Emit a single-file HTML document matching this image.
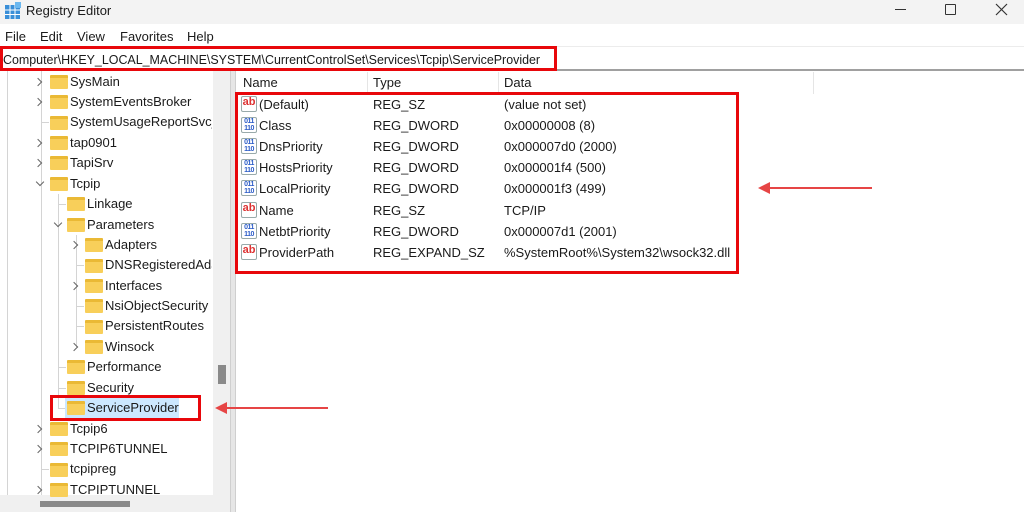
<!DOCTYPE html>
<html><head><style>
*{margin:0;padding:0;box-sizing:border-box}
body{width:1024px;height:512px;overflow:hidden;background:#fff;font-family:"Liberation Sans",sans-serif;font-size:13px;color:#1a1a1a;position:relative}
.a{position:absolute;white-space:nowrap}
.t{position:absolute;white-space:nowrap;height:18px;line-height:18px}
.f{position:absolute;width:18px;height:14px;background:#f8cf5a;border-radius:1px;border-top:3px solid #eab935}
.ch{position:absolute;width:6px;height:6px;border-right:1.3px solid #666;border-bottom:1.3px solid #666}
.r{position:absolute;left:0;transform:rotate(-45deg)}
.d{transform:rotate(45deg)}
.vl{position:absolute;width:1px;background:#d4d4d4}
.hl{position:absolute;height:1px;background:#d4d4d4}
.ic{position:absolute;width:16px;height:16px;border:1px solid #9aa;background:#fff;border-radius:2px;font-size:9px;font-weight:bold;line-height:10px;text-align:center}
.ab{color:#d33;font-size:11px;line-height:11px}
.bin{color:#2a5bc7;font-size:7px;line-height:7px;letter-spacing:-0.5px}
.box{position:absolute;border:3px solid #e8070b}
</style></head><body>
<div class="a" style="left:0;top:0;width:1024px;height:24px;background:#f3f3f3"></div>
<svg class="a" style="left:4px;top:2px" width="18" height="18"><rect x="1" y="3" width="15" height="14" fill="#3a8fd8"/><g stroke="#fff" stroke-width="1"><line x1="1" y1="8" x2="16" y2="8"/><line x1="1" y1="12.5" x2="16" y2="12.5"/><line x1="6" y1="3" x2="6" y2="17"/><line x1="11" y1="3" x2="11" y2="17"/></g><rect x="11" y="0" width="6" height="6" fill="#6bb8f0"/></svg>
<div class="t" style="left:26px;top:2px;font-size:13px">Registry Editor</div>
<div class="a" style="left:895px;top:9px;width:11px;height:1px;background:#333"></div>
<div class="a" style="left:945px;top:4px;width:11px;height:11px;border:1.3px solid #333;border-radius:1px"></div>
<svg class="a" style="left:995px;top:3px" width="13" height="13"><path d="M1 1L12 12M12 1L1 12" stroke="#333" stroke-width="1.2"/></svg>
<div class="t" style="left:5px;top:28px">File</div>
<div class="t" style="left:40px;top:28px">Edit</div>
<div class="t" style="left:77px;top:28px">View</div>
<div class="t" style="left:120px;top:28px">Favorites</div>
<div class="t" style="left:187px;top:28px">Help</div>
<div class="a" style="left:0;top:46px;width:1024px;height:1px;background:#ececec"></div>
<div class="t" style="left:3px;top:51px;font-size:12.45px">Computer\HKEY_LOCAL_MACHINE\SYSTEM\CurrentControlSet\Services\Tcpip\ServiceProvider</div>
<div class="a" style="left:0;top:69px;width:1024px;height:2px;background:#a0a0a0"></div>
<div class="a" style="left:213px;top:71px;width:17px;height:424px;background:#f0f0f0"></div>
<div class="a" style="left:218px;top:365px;width:8px;height:19px;background:#8a8a8a"></div>
<div class="a" style="left:0;top:495px;width:230px;height:17px;background:#f0f0f0"></div>
<div class="a" style="left:40px;top:501px;width:90px;height:6px;background:#8a8a8a"></div>
<div class="a" style="left:230px;top:71px;width:6px;height:441px;background:#e6e6e6;border-left:1px solid #cfcfcf;border-right:1px solid #cfcfcf"></div>
<div class="vl" style="left:7px;top:71px;height:424px"></div>
<div class="vl" style="left:41px;top:71px;height:424px"></div>
<div class="vl" style="left:58px;top:194px;height:214px"></div>
<div class="vl" style="left:76px;top:235px;height:112px"></div>
<div class="hl" style="left:41px;top:122px;width:8px"></div>
<div class="hl" style="left:41px;top:469px;width:8px"></div>
<div class="hl" style="left:58px;top:204px;width:8px"></div>
<div class="hl" style="left:58px;top:367px;width:8px"></div>
<div class="hl" style="left:58px;top:388px;width:8px"></div>
<div class="hl" style="left:58px;top:408px;width:8px"></div>
<div class="hl" style="left:76px;top:265px;width:8px"></div>
<div class="hl" style="left:76px;top:306px;width:8px"></div>
<div class="hl" style="left:76px;top:326px;width:8px"></div>
<div class="a" style="left:65px;top:398px;width:114px;height:20px;background:#cce8ff"></div>
<div class="ch r" style="left:35px;top:79px"></div><div class="f" style="left:50px;top:75px"></div><div class="t" style="left:70px;top:73px">SysMain</div>
<div class="ch r" style="left:35px;top:99px"></div><div class="f" style="left:50px;top:95px"></div><div class="t" style="left:70px;top:93px">SystemEventsBroker</div>
<div class="f" style="left:50px;top:116px"></div><div class="t" style="left:70px;top:113px;width:142px;overflow:hidden">SystemUsageReportSvc_(</div>
<div class="ch r" style="left:35px;top:140px"></div><div class="f" style="left:50px;top:136px"></div><div class="t" style="left:70px;top:134px">tap0901</div>
<div class="ch r" style="left:35px;top:160px"></div><div class="f" style="left:50px;top:156px"></div><div class="t" style="left:70px;top:154px">TapiSrv</div>
<div class="ch d" style="left:37px;top:179px"></div><div class="f" style="left:50px;top:177px"></div><div class="t" style="left:70px;top:175px">Tcpip</div>
<div class="f" style="left:67px;top:197px"></div><div class="t" style="left:87px;top:195px">Linkage</div>
<div class="ch d" style="left:55px;top:220px"></div><div class="f" style="left:67px;top:218px"></div><div class="t" style="left:87px;top:216px">Parameters</div>
<div class="ch r" style="left:71px;top:242px"></div><div class="f" style="left:85px;top:238px"></div><div class="t" style="left:105px;top:236px">Adapters</div>
<div class="f" style="left:85px;top:259px"></div><div class="t" style="left:105px;top:256px;width:107px;overflow:hidden">DNSRegisteredAdapters</div>
<div class="ch r" style="left:71px;top:283px"></div><div class="f" style="left:85px;top:279px"></div><div class="t" style="left:105px;top:277px">Interfaces</div>
<div class="f" style="left:85px;top:299px"></div><div class="t" style="left:105px;top:297px">NsiObjectSecurity</div>
<div class="f" style="left:85px;top:320px"></div><div class="t" style="left:105px;top:317px">PersistentRoutes</div>
<div class="ch r" style="left:71px;top:344px"></div><div class="f" style="left:85px;top:340px"></div><div class="t" style="left:105px;top:338px">Winsock</div>
<div class="f" style="left:67px;top:360px"></div><div class="t" style="left:87px;top:358px">Performance</div>
<div class="f" style="left:67px;top:381px"></div><div class="t" style="left:87px;top:379px">Security</div>
<div class="f" style="left:67px;top:401px"></div><div class="t" style="left:87px;top:399px">ServiceProvider</div>
<div class="ch r" style="left:35px;top:426px"></div><div class="f" style="left:50px;top:422px"></div><div class="t" style="left:70px;top:420px">Tcpip6</div>
<div class="ch r" style="left:35px;top:446px"></div><div class="f" style="left:50px;top:442px"></div><div class="t" style="left:70px;top:440px">TCPIP6TUNNEL</div>
<div class="f" style="left:50px;top:463px"></div><div class="t" style="left:70px;top:460px">tcpipreg</div>
<div class="ch r" style="left:35px;top:487px"></div><div class="f" style="left:50px;top:483px"></div><div class="t" style="left:70px;top:481px">TCPIPTUNNEL</div>
<div class="t" style="left:243px;top:74px">Name</div>
<div class="t" style="left:373px;top:74px">Type</div>
<div class="t" style="left:504px;top:74px">Data</div>
<div class="vl" style="left:367px;top:72px;height:22px;background:#e5e5e5"></div>
<div class="vl" style="left:498px;top:72px;height:22px;background:#e5e5e5"></div>
<div class="vl" style="left:813px;top:72px;height:22px;background:#e5e5e5"></div>
<div class="ic ab" style="left:241px;top:96px">ab</div><div class="t" style="left:259px;top:96px">(Default)</div><div class="t" style="left:373px;top:96px">REG_SZ</div><div class="t" style="left:504px;top:96px">(value not set)</div>
<div class="ic bin" style="left:241px;top:117px">011<br>110</div><div class="t" style="left:259px;top:117px">Class</div><div class="t" style="left:373px;top:117px">REG_DWORD</div><div class="t" style="left:504px;top:117px">0x00000008 (8)</div>
<div class="ic bin" style="left:241px;top:138px">011<br>110</div><div class="t" style="left:259px;top:138px">DnsPriority</div><div class="t" style="left:373px;top:138px">REG_DWORD</div><div class="t" style="left:504px;top:138px">0x000007d0 (2000)</div>
<div class="ic bin" style="left:241px;top:159px">011<br>110</div><div class="t" style="left:259px;top:159px">HostsPriority</div><div class="t" style="left:373px;top:159px">REG_DWORD</div><div class="t" style="left:504px;top:159px">0x000001f4 (500)</div>
<div class="ic bin" style="left:241px;top:180px">011<br>110</div><div class="t" style="left:259px;top:180px">LocalPriority</div><div class="t" style="left:373px;top:180px">REG_DWORD</div><div class="t" style="left:504px;top:180px">0x000001f3 (499)</div>
<div class="ic ab" style="left:241px;top:202px">ab</div><div class="t" style="left:259px;top:202px">Name</div><div class="t" style="left:373px;top:202px">REG_SZ</div><div class="t" style="left:504px;top:202px">TCP/IP</div>
<div class="ic bin" style="left:241px;top:223px">011<br>110</div><div class="t" style="left:259px;top:223px">NetbtPriority</div><div class="t" style="left:373px;top:223px">REG_DWORD</div><div class="t" style="left:504px;top:223px">0x000007d1 (2001)</div>
<div class="ic ab" style="left:241px;top:244px">ab</div><div class="t" style="left:259px;top:244px">ProviderPath</div><div class="t" style="left:373px;top:244px">REG_EXPAND_SZ</div><div class="t" style="left:504px;top:244px">%SystemRoot%\System32\wsock32.dll</div>
<div class="box" style="left:0;top:46px;width:557px;height:25px"></div>
<div class="box" style="left:235px;top:92px;width:504px;height:182px"></div>
<div class="box" style="left:50px;top:395px;width:151px;height:26px"></div>
<svg class="a" style="left:0;top:0" width="1024" height="512">
<line x1="872" y1="188" x2="768" y2="188" stroke="#e64545" stroke-width="2"/>
<polygon points="758,188 770,182 770,194" fill="#e64545"/>
<line x1="328" y1="408" x2="225" y2="408" stroke="#e64545" stroke-width="2"/>
<polygon points="215,408 227,402 227,414" fill="#e64545"/>
</svg>
</body></html>
